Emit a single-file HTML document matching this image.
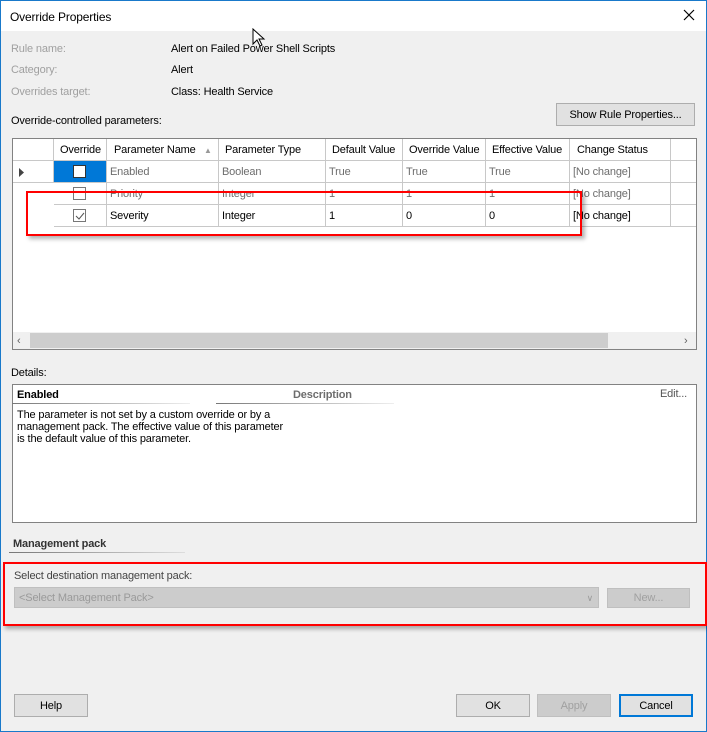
<!DOCTYPE html>
<html><head><style>
*{box-sizing:border-box;margin:0;padding:0}
body{width:707px;height:732px;background:#f0f0f0;font-family:"Liberation Sans",sans-serif;font-size:11px;letter-spacing:-0.15px;color:#000;position:relative;overflow:hidden}
.a{position:absolute;white-space:nowrap}
.t{margin-top:1px}
.win{position:absolute;left:0;top:0;width:707px;height:732px;border:1px solid #1979ca}
.g{color:#a0a0a0}
.btn{position:absolute;height:23px;border:1px solid #adadad;background:#e1e1e1;text-align:center;line-height:22px}
.dis{color:#a0a0a0;background:#cccccc;border-color:#bfbfbf}
.cell{position:absolute;height:22px;line-height:23px;padding-left:3px;border-right:1px solid #c8c8c8;border-bottom:1px solid #c8c8c8;overflow:hidden}
.cb{position:absolute;width:13px;height:13px;border:1px solid #333;background:#fff}
</style></head><body>
<div class="win"></div>
<div class="a" style="left:1px;top:1px;width:705px;height:30px;background:#fff"></div>
<div class="a" style="left:10px;top:10px;font-size:12px">Override Properties</div>
<svg class="a" style="left:683px;top:9px" width="12" height="12"><path d="M1 1L11 11M11 1L1 11" stroke="#000" stroke-width="1.2"/></svg>
<svg class="a" style="left:252px;top:28px" width="14" height="20"><path d="M1 1V16L5 12L8 18L10 17L7 11H12Z" fill="#fff" stroke="#000"/></svg>

<div class="a g t" style="left:11px;top:42px">Rule name:</div>
<div class="a g t" style="left:11px;top:63px">Category:</div>
<div class="a g t" style="left:11px;top:85px">Overrides target:</div>
<div class="a t" style="left:171px;top:42px">Alert on Failed Power Shell Scripts</div>
<div class="a t" style="left:171px;top:63px">Alert</div>
<div class="a t" style="left:171px;top:85px">Class: Health Service</div>
<div class="a t" style="left:11px;top:114px">Override-controlled parameters:</div>
<div class="btn" style="left:556px;top:103px;width:139px">Show Rule Properties...</div>

<div class="a" style="left:12px;top:138px;width:685px;height:212px;background:#fff;border:1px solid #828282"></div>
<div class="cell" style="left:13px;top:139px;width:41px"></div>
<div class="cell" style="left:54px;top:139px;width:53px;padding-left:6px">Override</div>
<div class="cell" style="left:107px;top:139px;width:112px;padding-left:7px">Parameter Name<span style="position:absolute;left:97px;top:0;color:#999;font-size:8px">▲</span></div>
<div class="cell" style="left:219px;top:139px;width:107px;padding-left:6px">Parameter Type</div>
<div class="cell" style="left:326px;top:139px;width:77px;padding-left:6px">Default Value</div>
<div class="cell" style="left:403px;top:139px;width:83px;padding-left:6px">Override Value</div>
<div class="cell" style="left:486px;top:139px;width:84px;padding-left:6px">Effective Value</div>
<div class="cell" style="left:570px;top:139px;width:101px;padding-left:7px">Change Status</div>
<div class="cell" style="left:671px;top:139px;width:25px;border-right:none"></div>
<div class="cell" style="left:13px;top:161px;width:41px"><svg style="position:absolute;left:6px;top:7px" width="6" height="9"><path d="M0 0L5 4.5L0 9Z" fill="#444"/></svg></div>
<div class="cell" style="left:54px;top:161px;width:53px;background:#0078d7"><div class="cb" style="left:19px;top:4px"></div></div>
<div class="cell" style="left:107px;top:161px;width:112px;color:#6d6d6d">Enabled</div>
<div class="cell" style="left:219px;top:161px;width:107px;color:#6d6d6d">Boolean</div>
<div class="cell" style="left:326px;top:161px;width:77px;color:#6d6d6d">True</div>
<div class="cell" style="left:403px;top:161px;width:83px;color:#6d6d6d">True</div>
<div class="cell" style="left:486px;top:161px;width:84px;color:#6d6d6d">True</div>
<div class="cell" style="left:570px;top:161px;width:101px;color:#6d6d6d">[No change]</div>
<div class="cell" style="left:671px;top:161px;width:25px;border-right:none"></div>
<div class="cell" style="left:54px;top:183px;width:53px"><div class="cb" style="left:19px;top:4px;border-color:#777"></div></div>
<div class="cell" style="left:107px;top:183px;width:112px;color:#6d6d6d">Priority</div>
<div class="cell" style="left:219px;top:183px;width:107px;color:#6d6d6d">Integer</div>
<div class="cell" style="left:326px;top:183px;width:77px;color:#6d6d6d">1</div>
<div class="cell" style="left:403px;top:183px;width:83px;color:#6d6d6d">1</div>
<div class="cell" style="left:486px;top:183px;width:84px;color:#6d6d6d">1</div>
<div class="cell" style="left:570px;top:183px;width:101px;color:#6d6d6d">[No change]</div>
<div class="cell" style="left:671px;top:183px;width:25px;border-right:none"></div>
<div class="cell" style="left:54px;top:205px;width:53px"><div class="cb" style="left:19px;top:4px;border-color:#777"></div><svg style="position:absolute;left:21px;top:7px" width="10" height="8"><path d="M1 4L4 7L9 1" stroke="#555" fill="none"/></svg></div>
<div class="cell" style="left:107px;top:205px;width:112px">Severity</div>
<div class="cell" style="left:219px;top:205px;width:107px">Integer</div>
<div class="cell" style="left:326px;top:205px;width:77px">1</div>
<div class="cell" style="left:403px;top:205px;width:83px">0</div>
<div class="cell" style="left:486px;top:205px;width:84px">0</div>
<div class="cell" style="left:570px;top:205px;width:101px">[No change]</div>
<div class="cell" style="left:671px;top:205px;width:25px;border-right:none"></div>
<div class="a" style="left:13px;top:332px;width:683px;height:17px;background:#f0f0f0"></div>
<div class="a" style="left:30px;top:333px;width:578px;height:15px;background:#cdcdcd"></div>
<div class="a" style="left:17px;top:335px;color:#606060;font-size:11px">‹</div>
<div class="a" style="left:684px;top:335px;color:#606060;font-size:11px">›</div>
<div class="a" style="left:26px;top:191px;width:556px;height:45px;border:2px solid #f00;box-shadow:3px 3px 4px rgba(0,0,0,.3)"></div>

<div class="a t" style="left:11px;top:366px">Details:</div>
<div class="a" style="left:12px;top:384px;width:685px;height:139px;background:#fff;border:1px solid #828282"></div>
<div class="a t" style="left:17px;top:388px;font-weight:bold">Enabled</div>
<div class="a" style="left:12px;top:403px;width:178px;height:1px;background:linear-gradient(90deg,#777,#eee)"></div>
<div class="a t" style="left:293px;top:388px;font-weight:bold;color:#6d6d6d">Description</div>
<div class="a" style="left:216px;top:403px;width:178px;height:1px;background:linear-gradient(90deg,#777,#eee)"></div>
<div class="a t" style="left:660px;top:387px;color:#555">Edit...</div>
<div class="a t" style="left:17px;top:408px;line-height:12px">The parameter is not set by a custom override or by a<br>management pack. The effective value of this parameter<br>is the default value of this parameter.</div>

<div class="a t" style="left:13px;top:537px;font-weight:bold;color:#333">Management pack</div>
<div class="a" style="left:9px;top:552px;width:176px;height:1px;background:linear-gradient(90deg,#777,#ddd)"></div>
<div class="a t" style="left:14px;top:569px;color:#444">Select destination management pack:</div>
<div class="a" style="left:14px;top:587px;width:585px;height:21px;background:#cccccc;border:1px solid #bfbfbf;color:#9a9a9a;line-height:20px;padding-left:4px">&lt;Select Management Pack&gt;<span style="position:absolute;right:5px;top:0;font-size:9px">∨</span></div>
<div class="btn dis" style="left:607px;top:588px;width:83px;height:20px;line-height:19px">New...</div>
<div class="a" style="left:3px;top:562px;width:704px;height:64px;border:2px solid #f00;box-shadow:2px 3px 4px rgba(0,0,0,.3)"></div>

<div class="btn" style="left:14px;top:694px;width:74px">Help</div>
<div class="btn" style="left:456px;top:694px;width:74px">OK</div>
<div class="btn dis" style="left:537px;top:694px;width:74px">Apply</div>
<div class="btn" style="left:619px;top:694px;width:74px;border:2px solid #0078d7;line-height:20px">Cancel</div>
</body></html>
